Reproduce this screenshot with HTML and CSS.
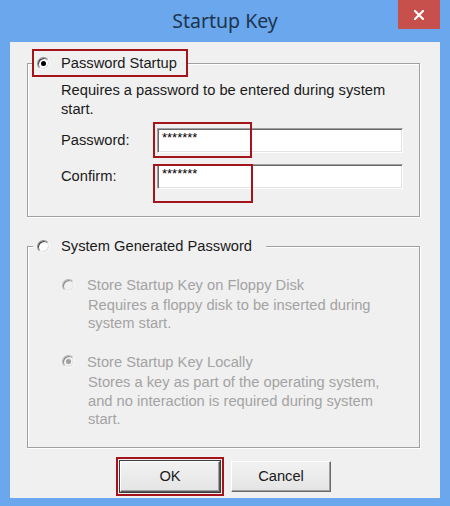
FILE: index.html
```html
<!DOCTYPE html>
<html lang="en">
<head>
  <meta charset="UTF-8" />
  <title>Startup Key</title>
  <link rel="stylesheet" href="styles.css">
</head>
<body>
  <div class="window">
    <div class="titlebar">
      <span class="title">Startup Key</span>
      <button class="close" title="Close">
        <svg width="10" height="10" viewBox="0 0 10 10">
          <path d="M1 1 L9 9 M9 1 L1 9" stroke="#fff" stroke-width="2.2" stroke-linecap="square" />
        </svg>
      </button>
    </div>

    <div class="client">
      <fieldset class="group" id="grpPassword">
        <legend class="marked">
          <span class="radio checked"></span>Password Startup
        </legend>
        <div class="pw-body">
          <p class="desc wide">Requires a password to be entered during system start.</p>
          <div class="field">
            <label>Password:</label>
            <div class="input">*******<span class="mark mark-pw"></span></div>
          </div>
          <div class="field">
            <label>Confirm:</label>
            <div class="input">*******<span class="mark mark-confirm"></span></div>
          </div>
        </div>
      </fieldset>

      <fieldset class="group" id="grpSystem">
        <legend class="plain">
          <span class="radio"></span>System Generated Password
        </legend>
        <div class="sys-body">
          <div class="option disabled">
            <div class="opt-row"><span class="radio"></span>Store Startup Key on Floppy Disk</div>
            <p class="desc sub">Requires a floppy disk to be inserted during system start.</p>
          </div>
          <div class="option disabled second">
            <div class="opt-row"><span class="radio checked"></span>Store Startup Key Locally</div>
            <p class="desc sub">Stores a key as part of the operating system, and no interaction is required during system start.</p>
          </div>
        </div>
      </fieldset>

      <div class="buttons">
        <span class="ok-mark"><button class="btn default">OK</button></span>
        <button class="btn">Cancel</button>
      </div>
    </div>
  </div>
</body>
</html>
```

FILE: styles.css
```css
body {
  margin: 0;
  font-family: "Liberation Sans", Arial, sans-serif;
  font-size: 14.7px;
  color: #1a1a1a;
}
.window {
  width: 450px;
  height: 506px;
  box-sizing: border-box;
  padding: 0 10px 8px 10px;
  background-color: #6aa7ec;
  display: flex;
  flex-direction: column;
}
.titlebar {
  height: 42px;
  flex: none;
  position: relative;
  display: flex;
  align-items: center;
  justify-content: center;
}
.title {
  font-family: "Noto Sans", sans-serif;
  font-size: 19.5px;
  color: #1e344f;
  margin-top: -1px;
}
.close {
  position: absolute;
  top: 0;
  right: 0;
  width: 42px;
  height: 29px;
  border: 0;
  padding: 0;
  background-color: #c7504c;
  display: flex;
  align-items: center;
  justify-content: center;
}
.client {
  flex: 1;
  background-color: #f0f0f0;
  padding: 7px 20px 0 17px;
  display: flex;
  flex-direction: column;
}

/* group boxes */
.group {
  margin: 0;
  padding: 0;
  min-width: 0;
  border: 1px solid #a0a0a0;
  box-shadow: 1px 1px 0 #fff, inset 1px 1px 0 #fff;
}
.group legend {
  display: flex;
  align-items: center;
  background-color: #f0f0f0;
}
.group legend.marked {
  margin-left: 4px;
  height: 28px;
  box-sizing: border-box;
  border: 2px solid #a3151a;
  padding: 0 9px 0 3px;
}
.group legend.plain {
  margin-left: 5px;
  height: 20px;
  padding: 0 14px 0 4px;
}
.group legend .radio {
  margin-right: 11px;
}
#grpSystem {
  margin-top: 19px;
}

/* radio buttons, classic sunken look */
.radio {
  display: inline-block;
  flex: none;
  position: relative;
  width: 13px;
  height: 13px;
  box-sizing: border-box;
  border-radius: 50%;
  border: 1px solid;
  border-color: #8f8f8f #fbfbfb #fbfbfb #8f8f8f;
  background-color: #fff;
  box-shadow: inset 1px 1px 0 #404040, inset -1px -1px 0 #dcdcdc;
}
.radio.checked::after {
  content: "";
  position: absolute;
  top: 3px;
  left: 3px;
  width: 5px;
  height: 5px;
  border-radius: 50%;
  background-color: #000;
}
.disabled .radio {
  background-color: #f0f0f0;
  border-color: #b4b4b4 #fbfbfb #fbfbfb #b4b4b4;
  box-shadow: inset 1px 1px 0 #8a8a8a, inset -1px -1px 0 #e3e3e3;
}
.disabled .radio.checked::after {
  background-color: #a0a0a0;
}

.desc {
  margin: 0;
  line-height: 18.5px;
}
.desc.wide {
  width: 345px;
}
.desc.sub {
  width: 310px;
  margin: 1px 0 0 26px;
}

/* password startup */
.pw-body {
  padding: 4px 0 27px 33px;
}
.field {
  display: flex;
  align-items: center;
  margin-top: 11px;
}
.pw-body .desc + .field {
  margin-top: 10px;
}
.field label {
  width: 96px;
  line-height: 25px;
}
.input {
  position: relative;
  width: 246px;
  height: 25px;
  box-sizing: border-box;
  padding: 2px 0 0 4px;
  background-color: #fff;
  border: 1px solid;
  border-color: #a0a0a0 #fff #fff #a0a0a0;
  box-shadow: inset 1px 1px 0 #696969, inset -1px -1px 0 #e3e3e3;
  font-size: 13px;
  line-height: 13px;
  color: #000;
}

/* red highlight frames */
.mark {
  position: absolute;
  border: 2px solid #a3151a;
  box-sizing: border-box;
}
.mark-pw {
  left: -5px;
  top: -7px;
  width: 99px;
  height: 36px;
}
.mark-confirm {
  left: -5px;
  top: -1px;
  width: 100px;
  height: 39px;
}

/* system generated */
.sys-body {
  padding: 20px 0 18px 34px;
}
.option.second {
  margin-top: 20px;
}
.option.second .desc.sub {
  margin-top: 2px;
}
.opt-row {
  display: flex;
  align-items: center;
  line-height: 18.5px;
}
.opt-row .radio {
  margin-right: 12px;
}
.disabled {
  color: #a3a3a3;
}

/* dialog buttons */
.buttons {
  display: flex;
  justify-content: center;
  align-items: center;
  gap: 7px;
  margin-top: 9px;
}
.ok-mark {
  display: flex;
  padding: 2px;
  border: 2px solid #a3151a;
}
.btn {
  width: 100px;
  height: 31px;
  padding: 0;
  font-family: "Liberation Sans", Arial, sans-serif;
  font-size: 14.7px;
  color: #1a1a1a;
  border: 1px solid;
  border-color: #fff #696969 #696969 #fff;
  box-shadow: inset -1px -1px 0 #a0a0a0;
  background: linear-gradient(#f2f2f2, #e4e4e4);
}
.btn.default {
  outline: 1px solid #3c3c3c;
  outline-offset: 0;
  border-color: #fff #5a5a5a #5a5a5a #fff;
}
```
